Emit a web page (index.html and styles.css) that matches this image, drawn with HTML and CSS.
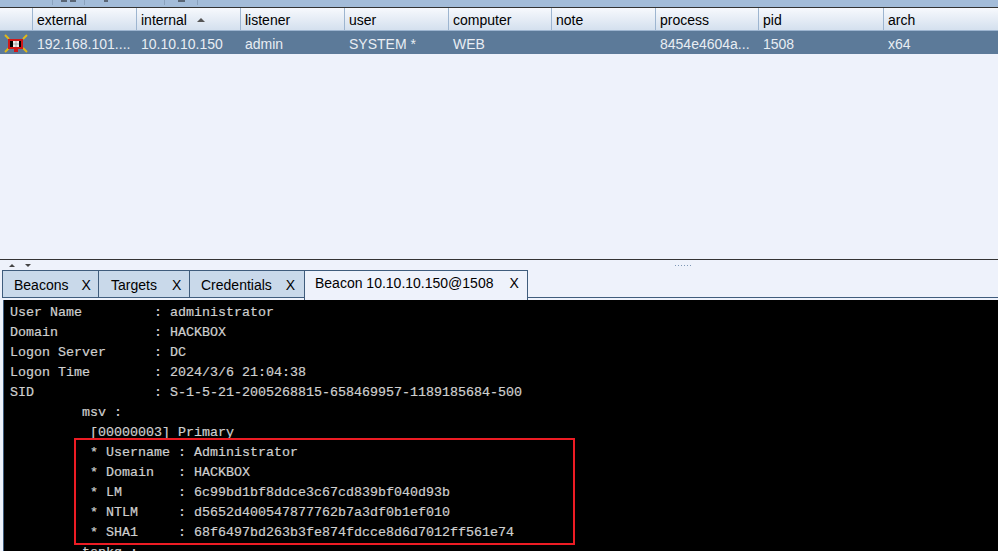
FILE: index.html
```html
<!DOCTYPE html>
<html lang="en">
<head>
<meta charset="utf-8">
<title>Cobalt Strike</title>
<link rel="stylesheet" href="styles.css">
</head>
<body>
<div class="toolbar">
  <span class="tool tool-a"></span><span class="tool tool-b"><i class="tip tip-1"></i><i class="tip tip-2"></i></span><span class="tool tool-c"><i class="tip tip-3"></i></span><span class="tool tool-d"><i class="tip tip-4"></i></span><span class="tool tool-e"></span>
</div>
<section class="table-pane">
  <div class="row head">
    <div class="cell c-icon"></div>
    <div class="cell c-ext">external</div>
    <div class="cell c-int">internal <span class="sort"></span></div>
    <div class="cell c-lis">listener</div>
    <div class="cell c-usr">user</div>
    <div class="cell c-com">computer</div>
    <div class="cell c-not">note</div>
    <div class="cell c-pro">process</div>
    <div class="cell c-pid">pid</div>
    <div class="cell c-arc">arch</div>
  </div>
  <div class="row sel">
    <div class="cell c-icon">
      <svg class="beacon" width="24" height="20" viewBox="0 0 24 20">
        <path d="M1 1l4 4M23 1l-4 4M1 18l4-4M23 18l-4-4" stroke="#e0b818" stroke-width="2"/>
        <rect x="5" y="6" width="13" height="8" fill="#000" stroke="#d01818" stroke-width="2"/>
        <rect x="9" y="7" width="6" height="6" fill="#ececec"/>
        <path d="M9 10h6M12 7v6" stroke="#888" stroke-width="0.600"/>
        <rect x="10" y="15" width="4" height="3" fill="#d01818"/>
      </svg>
    </div>
    <div class="cell c-ext">192.168.101....</div>
    <div class="cell c-int">10.10.10.150</div>
    <div class="cell c-lis">admin</div>
    <div class="cell c-usr">SYSTEM *</div>
    <div class="cell c-com">WEB</div>
    <div class="cell c-not"></div>
    <div class="cell c-pro">8454e4604a...</div>
    <div class="cell c-pid">1508</div>
    <div class="cell c-arc">x64</div>
  </div>
</section>
<div class="divider">
  <span class="arrows"><i class="up"></i><i class="down"></i></span>
  <span class="grip"></span>
</div>
<nav class="tabs">
  <div class="tab">Beacons<span class="x">X</span></div>
  <div class="tab">Targets<span class="x">X</span></div>
  <div class="tab">Credentials<span class="x">X</span></div>
  <div class="tab active">Beacon 10.10.10.150@1508<span class="x">X</span></div>
  <div class="tab-fill"></div>
</nav>
<main class="console">
<pre class="log">User Name         : administrator
Domain            : HACKBOX
Logon Server      : DC
Logon Time        : 2024/3/6 21:04:38
SID               : S-1-5-21-2005268815-658469957-1189185684-500
         msv :
          [00000003] Primary
          * Username : Administrator
          * Domain   : HACKBOX
          * LM       : 6c99bd1bf8ddce3c67cd839bf040d93b
          * NTLM     : d5652d400547877762b7a3df0b1ef010
          * SHA1     : 68f6497bd263b3fe874fdcce8d6d7012ff561e74
         tspkg :</pre>
  <div class="highlight"></div>
</main>
</body>
</html>
```
FILE: styles.css
```css
* { box-sizing: border-box; }
html, body { margin: 0; height: 100%; }
body {
  width: 998px;
  height: 551px;
  overflow: hidden;
  background: #eef2fb;
  font-family: "Liberation Sans", Arial, sans-serif;
  font-size: 14px;
  color: #000;
  display: flex;
  flex-direction: column;
}
.toolbar {
  height: 8px;
  flex: none;
  background: #a3bcd9;
  border-bottom: 1px solid #333;
  display: flex;
}
.tool { height: 5px; border-right: 1px solid #8aa2bd; position: relative; }
.tool-a { width: 53px; }
.tool-b { width: 32px; }
.tool-c { width: 80px; }
.tool-d { width: 33px; }
.tool-e { width: 1px; border: 0; }
.tip { position: absolute; top: 0; height: 2px; background: #5a6675; }
.tip-1 { left: 8px; width: 6px; }
.tip-2 { left: 17px; width: 6px; }
.tip-3 { left: 19px; width: 4px; }
.tip-4 { left: 13px; width: 7px; }
.table-pane {
  height: 252px;
  flex: none;
  background: #eef2fb;
  border-bottom: 1px solid #333;
}
.row { display: flex; }
.head {
  height: 23px;
  background: linear-gradient(#f7f9fd, #d4e0ee);
  border-bottom: 1px solid #9db5d0;
}
.sel { height: 23px; background: #5c7a99; color: #e8edf3; }
.cell {
  flex: none;
  padding-left: 5px;
  line-height: 22px;
  white-space: nowrap;
  overflow: hidden;
}
.head .cell { border-left: 1px solid #9db5d0; padding-left: 4px; padding-top: 1px; }
.sel .cell { padding-top: 3px; line-height: 20px; }
.head .c-icon { border-left: 0; }
.c-icon { width: 32px; }
.sel .c-icon { padding: 0 0 0 4px; }
.c-ext, .c-int, .c-lis, .c-usr { width: 104px; }
.c-com { width: 103px; }
.c-not { width: 104px; }
.c-pro { width: 103px; }
.c-pid { width: 125px; }
.c-arc { flex: 1; }
.beacon { display: block; margin-top: 3px; }
.sort {
  display: inline-block;
  width: 0; height: 0;
  margin-left: 6px;
  vertical-align: 3px;
  border-left: 4px solid transparent;
  border-right: 4px solid transparent;
  border-bottom: 4px solid #555;
}
.divider {
  height: 10px;
  flex: none;
  display: flex;
  justify-content: space-between;
  align-items: center;
  padding: 0 306px 0 9px;
}
.arrows { display: flex; gap: 10px; }
.arrows i { width: 0; height: 0; border-left: 3px solid transparent; border-right: 3px solid transparent; }
.up { border-bottom: 3px solid #444; }
.down { border-top: 3px solid #444; }
.grip {
  width: 18px;
  height: 3px;
  background-image: radial-gradient(#7d97b5 0.7px, transparent 0.8px);
  background-size: 3px 3px;
}
.tabs {
  height: 30px;
  flex: none;
  padding-left: 2px;
  display: flex;
  align-items: flex-start;
}
.tab {
  height: 28px;
  padding-left: 11px;
  background: #c9d9ea;
  border: 1px solid #3f5c7c;
  border-right-width: 0;
  line-height: 29px;
  white-space: nowrap;
}
.tab:nth-child(1) { width: 96px; }
.tab:nth-child(2) { width: 91px; padding-left: 12px; }
.tab:nth-child(3) { width: 115px; }
.tab.active {
  width: 224px;
  height: 30px;
  background: #eef2fb;
  border-right-width: 1px;
  border-bottom: 0;
  padding-left: 10px;
  line-height: 25px;
}
.tab-fill { flex: 1; height: 28px; border-bottom: 1px solid #3f5c7c; }
.tab .x { margin-left: 13px; }
.tab:nth-child(2) .x { margin-left: 15px; }
.tab:nth-child(3) .x { margin-left: 14px; }
.tab.active .x { margin-left: 16px; }
.console {
  flex: 1;
  min-height: 0;
  position: relative;
  margin-left: 3px;
  padding: 3px 0 0 6px;
  background: #000;
  border-left: 1px solid #3f5c7c;
  overflow: hidden;
}
.log {
  margin: 0;
  font-family: "Liberation Mono", "Courier New", monospace;
  font-size: 13.33px;
  line-height: 20px;
  color: #cfcfcf;
  -webkit-text-stroke: 0.2px #cfcfcf;
}
.highlight {
  position: absolute;
  left: 70px;
  top: 138px;
  width: 501px;
  height: 107px;
  border: 2px solid #ed1c24;
}
```
